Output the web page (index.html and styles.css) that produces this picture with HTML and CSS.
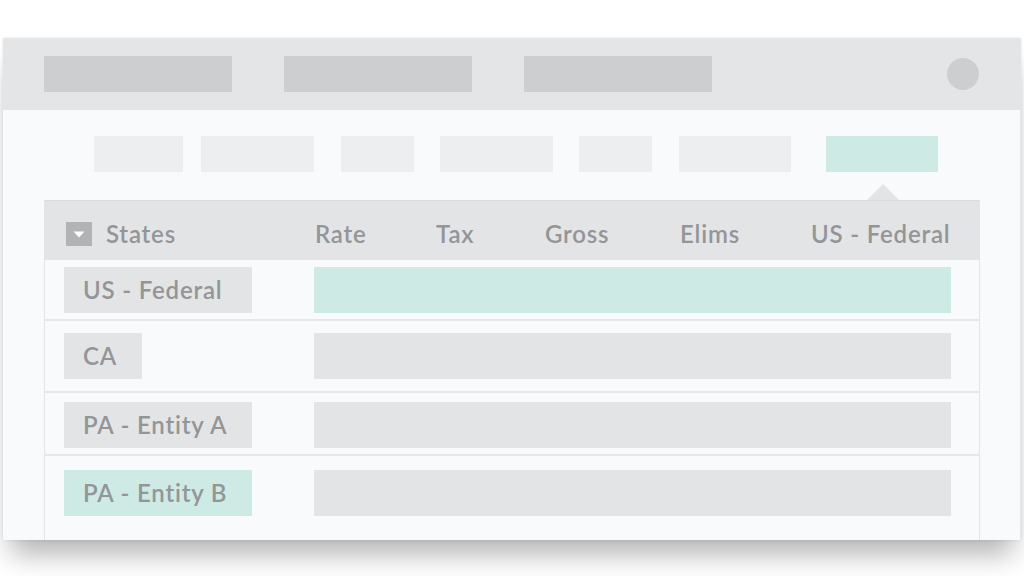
FILE: index.html
```html
<!DOCTYPE html>
<html lang="en">
<head>
<meta charset="utf-8">
<title>States</title>
<link rel="stylesheet" href="styles.css">
</head>
<body>
<div class="window">
  <div class="topbar">
    <div class="topbar-item"></div>
    <div class="topbar-item"></div>
    <div class="topbar-item"></div>
    <div class="avatar"></div>
  </div>
  <div class="content">
    <div class="tabs">
      <div class="tab tab-1"></div>
      <div class="tab tab-2"></div>
      <div class="tab tab-3"></div>
      <div class="tab tab-4"></div>
      <div class="tab tab-5"></div>
      <div class="tab tab-6"></div>
      <div class="tab tab-7 tab-active"></div>
    </div>
    <div class="table">
      <div class="pointer"></div>
      <div class="table-head">
        <div class="head-first">
          <span class="dropdown"><svg width="26" height="24" viewBox="0 0 26 24"><path d="M7.5 9.5 L18.5 9.5 L13 15.5 Z" fill="#ffffff"/></svg></span>
          <span>States</span>
        </div>
        <div>Rate</div>
        <div>Tax</div>
        <div>Gross</div>
        <div>Elims</div>
        <div>US - Federal</div>
      </div>
      <div class="row row-1">
        <div class="chip chip-wide">US - Federal</div>
        <div class="bar bar-active"></div>
      </div>
      <div class="row row-2">
        <div class="chip chip-narrow">CA</div>
        <div class="bar"></div>
      </div>
      <div class="row row-3">
        <div class="chip chip-wide">PA - Entity A</div>
        <div class="bar"></div>
      </div>
      <div class="row row-4">
        <div class="chip chip-wide chip-active">PA - Entity B</div>
        <div class="bar"></div>
      </div>
    </div>
  </div>
</div>
</body>
</html>
```

FILE: styles.css
```css
html, body {
  margin: 0;
  padding: 0;
  background: #ffffff;
}
body {
  font-family: Lato, "Noto Sans", sans-serif;
  width: 1024px;
  height: 576px;
  overflow: hidden;
}
.window {
  margin: 38px 0 0 3px;
  width: 1018px;
  height: 502px;
  background: #f9fafb;
  display: flex;
  flex-direction: column;
  box-shadow: 0 22px 26px -8px rgba(0, 0, 0, 0.3), 0 0 3px rgba(0, 0, 0, 0.1);
}
.topbar {
  height: 72px;
  flex: none;
  background: #e4e5e7;
  display: flex;
  align-items: center;
  padding: 0 42px 0 41px;
}
.topbar-item {
  width: 188px;
  height: 36px;
  background: #cdcecf;
  margin-right: 52px;
}
.avatar {
  margin-left: auto;
  width: 32px;
  height: 32px;
  border-radius: 50%;
  background: #cdcecf;
}
.content {
  flex: 1;
  display: flex;
  flex-direction: column;
  padding: 0 40px 0 41px;
  border-right: 1px solid #e6e7e9;
}
.tabs {
  display: flex;
  margin: 26px 0 28px 50px;
  height: 36px;
}
.tab {
  height: 36px;
  background: #eceeef;
}
.tab-1 { width: 89px; }
.tab-2 { width: 113px; margin-left: 18px; }
.tab-3 { width: 73px; margin-left: 27px; }
.tab-4 { width: 113px; margin-left: 26px; }
.tab-5 { width: 73px; margin-left: 26px; }
.tab-6 { width: 112px; margin-left: 27px; }
.tab-7 { width: 112px; margin-left: 35px; }
.tab-active { background: #cdeae5; }
.table {
  flex: 1;
  position: relative;
  display: flex;
  flex-direction: column;
  border-left: 1px solid #e4e5e7;
  border-right: 1px solid #e4e5e7;
}
.pointer {
  position: absolute;
  top: -16px;
  left: 822px;
  width: 0;
  height: 0;
  border-left: 16px solid transparent;
  border-right: 16px solid transparent;
  border-bottom: 16px solid #e3e4e6;
}
.table-head {
  height: 60px;
  box-sizing: border-box;
  padding: 6px 0 0 21px;
  background: #e3e4e6;
  border-top: 1px solid #d9dadc;
  display: grid;
  grid-template-columns: 249px 121px 109px 135px 131px auto;
  align-items: center;
  color: #939597;
  font-size: 24px;
  font-weight: 600;
  letter-spacing: 0.8px;
  white-space: nowrap;
}
.head-first {
  display: flex;
  align-items: center;
}
.dropdown {
  flex: none;
  width: 26px;
  height: 24px;
  background: #b2b3b5;
  margin-right: 14px;
  display: flex;
}
.row {
  display: grid;
  grid-template-columns: 250px 1fr;
  padding-left: 19px;
  padding-right: 28px;
  border-bottom: 2px solid #e6e7e9;
}
.row-1 { padding-top: 7px; padding-bottom: 6px; }
.row-2 { padding-top: 12px; padding-bottom: 12px; }
.row-3 { padding-top: 9px; padding-bottom: 6px; }
.row-4 { padding-top: 14px; border-bottom: none; }
.chip {
  height: 46px;
  line-height: 46px;
  padding-left: 19px;
  box-sizing: border-box;
  background: #e3e4e6;
  color: #939597;
  font-size: 24px;
  font-weight: 600;
  letter-spacing: 0.8px;
  white-space: nowrap;
}
.chip-wide { width: 188px; }
.chip-narrow { width: 78px; }
.chip-active { background: #cdeae5; }
.bar {
  height: 46px;
  background: #e3e4e6;
}
.bar-active { background: #cdeae5; }
```
